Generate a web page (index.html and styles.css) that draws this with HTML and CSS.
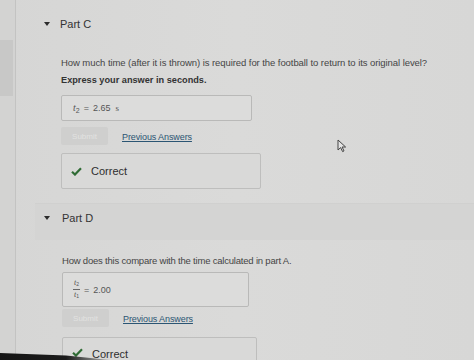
FILE: index.html
```html
<!DOCTYPE html>
<html>
<head>
<meta charset="utf-8">
<link rel="stylesheet" href="styles.css">
</head>
<body>
<div class="screen">
  <aside class="rail"><div class="thumb"></div></aside>
  <main class="content">
    <section class="part part-c">
      <header class="part-head"><span class="caret"></span><span class="part-title">Part C</span></header>
      <div class="part-body">
        <p class="q">How much time (after it is thrown) is required for the football to return to its original level?</p>
        <p class="instr">Express your answer in seconds.</p>
        <div class="answer answer-c"><span class="var"><i>t</i><sub>2</sub></span><span class="eq">=</span><span class="val">2.65</span><span class="unit">s</span></div>
        <div class="actions"><button class="submit">Submit</button><a class="prev">Previous Answers</a></div>
        <div class="feedback"><svg class="check" viewBox="0 0 12 10" width="11" height="9"><path d="M1 5.2 L4.3 8.4 L11 1.4" fill="none" stroke="#2f6b34" stroke-width="2.4"/></svg><span>Correct</span></div>
      </div>
    </section>
    <section class="part part-d">
      <header class="part-head"><span class="caret"></span><span class="part-title">Part D</span></header>
      <div class="part-body">
        <p class="q q-d">How does this compare with the time calculated in part A.</p>
        <div class="answer answer-d"><span class="frac"><span class="num"><i>t</i><sub>2</sub></span><span class="den"><i>t</i><sub>1</sub></span></span><span class="eq">=</span><span class="val">2.00</span></div>
        <div class="actions actions-d"><button class="submit">Submit</button><a class="prev">Previous Answers</a></div>
        <div class="feedback feedback-d"><svg class="check" viewBox="0 0 12 10" width="11" height="9"><path d="M1 5.2 L4.3 8.4 L11 1.4" fill="none" stroke="#2f6b34" stroke-width="2.4"/></svg><span>Correct</span></div>
      </div>
    </section>
  </main>
  <svg class="cursor" viewBox="0 0 10 14" width="10" height="14"><path d="M1 1 L1 11 L3.6 8.6 L5.6 12.6 L7 11.9 L5.1 8 L8.6 8 Z" fill="#e4e4e4" stroke="#444" stroke-width="1"/></svg>
  <div class="bezel"></div>
</div>
</body>
</html>
```

FILE: styles.css
```css
* { box-sizing: border-box; }
html, body { margin: 0; padding: 0; }
body {
  width: 474px;
  height: 360px;
  overflow: hidden;
  background: #d8d8d7;
  font-family: "Liberation Sans", Arial, sans-serif;
  color: #3b3b3b;
}
.screen {
  position: relative;
  display: flex;
  width: 474px;
  height: 360px;
  background: linear-gradient(90deg, #d6d6d5 0%, #dadad9 50%, #d7d7d6 100%);
}
.rail {
  width: 16px;
  flex: none;
  background: #d3d3d2;
  border-right: 1px solid #c3c3c2;
  padding-top: 40px;
}
.thumb {
  width: 13px;
  height: 56px;
  background: #c8c8c7;
}
.content {
  flex: 1;
  display: flex;
  flex-direction: column;
}
.part {
  margin-left: 19px;
}
.part-head {
  display: flex;
  align-items: center;
  gap: 10px;
  padding-left: 9px;
}
.part-c .part-head {
  height: 44px;
  padding-top: 3px;
}
.part-d {
  margin-top: 14px;
}
.part-d .part-head {
  height: 37px;
  padding-bottom: 8px;
  background: #d4d4d3;
  border-top: 1px solid #d0d0cf;
}
.caret {
  width: 0;
  height: 0;
  border-left: 3.5px solid transparent;
  border-right: 3.5px solid transparent;
  border-top: 4px solid #2c2c2c;
}
.part-title {
  font-size: 11px;
  color: #333;
}
.part-d .part-title { margin-left: 2px; }
.part-body {
  padding-left: 26px;
  display: flex;
  flex-direction: column;
  align-items: flex-start;
}
.part-c .part-body { padding-top: 13px; }
.part-d .part-body { padding-top: 15px; padding-left: 27px; }
.q {
  margin: 0;
  font-size: 9.5px;
  line-height: 12px;
  letter-spacing: -0.07px;
  color: #454545;
  white-space: nowrap;
}
.q-d { letter-spacing: -0.2px; }
.instr {
  margin: 5px 0 0;
  font-size: 9.2px;
  line-height: 12px;
  font-weight: bold;
  color: #333;
}
.answer {
  display: flex;
  align-items: center;
  border: 1px solid #b9b9b8;
  border-radius: 2px;
  background: #dcdcdb;
  font-size: 9px;
  color: #555;
  padding-left: 11px;
}
.answer-c {
  margin-top: 9px;
  width: 191px;
  height: 26px;
}
.answer-d {
  margin-top: 5px;
  width: 187px;
  height: 35px;
  padding-left: 10px;
}
.var i, .frac i { font-family: "Liberation Serif", serif; font-size: 10px; }
sub { font-size: 7px; vertical-align: -2px; }
.eq { margin: 0 4px 0 4px; }
.unit { margin-left: 5px; font-family: "Liberation Serif", serif; }
.frac {
  display: flex;
  flex-direction: column;
  align-items: center;
  font-size: 7px;
  line-height: 9px;
}
.frac .num { border-bottom: 1px solid #666; padding: 0 1px; }
.frac i { font-size: 8px; }
.frac sub { font-size: 5px; vertical-align: -1px; }
.actions {
  display: flex;
  align-items: center;
  margin-top: 6px;
  height: 18px;
  gap: 14px;
}
.actions-d { margin-top: 2px; }
.submit {
  width: 47px;
  height: 18px;
  border: none;
  border-radius: 2px;
  background: #cfcfce;
  color: #e2e2e1;
  font-family: "Liberation Sans", Arial, sans-serif;
  font-size: 8px;
  padding: 0;
}
.prev {
  font-size: 9px;
  color: #2b5573;
  text-decoration: underline;
  letter-spacing: -0.1px;
  margin-top: 2px;
}
.feedback {
  margin-top: 8px;
  width: 200px;
  height: 36px;
  border: 1px solid #bebebd;
  border-radius: 2px;
  background: #d9d9d8;
  display: flex;
  align-items: center;
  padding-left: 9px;
  gap: 9px;
  font-size: 11px;
  color: #2f2f2f;
}
.feedback-d {
  margin-top: 10px;
  width: 195px;
  height: 40px;
  align-items: flex-start;
  padding-top: 10px;
}
.cursor {
  position: absolute;
  left: 337px;
  top: 139px;
}
.bezel {
  position: absolute;
  left: 0;
  bottom: 0;
  width: 110px;
  height: 7px;
  background: linear-gradient(90deg, #151515 0%, #1b1b1b 60%, rgba(30,30,30,0.2) 100%);
  clip-path: polygon(0 0, 60% 35%, 100% 100%, 0 100%);
}
```
